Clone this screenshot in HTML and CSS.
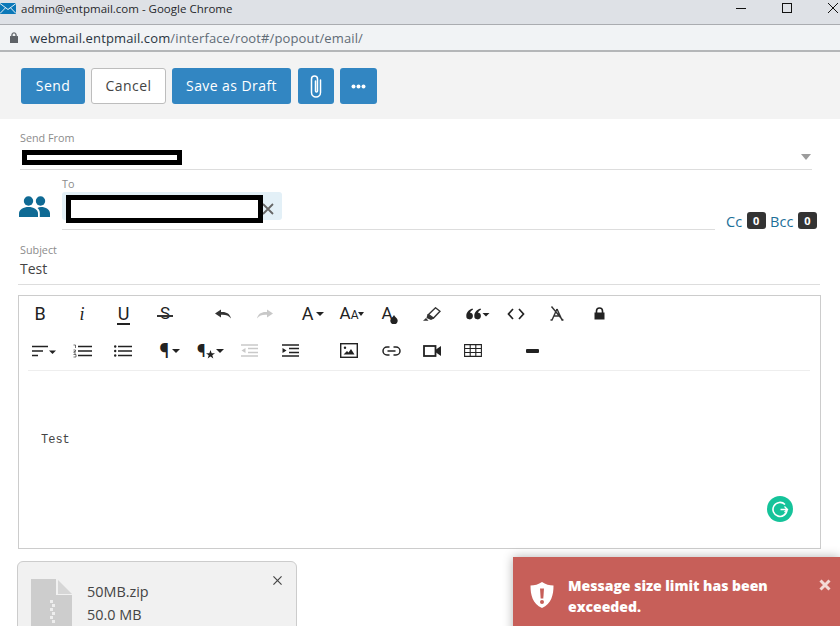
FILE: index.html
```html
<!DOCTYPE html>
<html lang="en">
<head>
<meta charset="utf-8">
<title>admin@entpmail.com - Google Chrome</title>
<link rel="stylesheet" href="styles.css">
</head>
<body>
<div class="page">
  <header class="titlebar">
    <svg class="env" width="16" height="11" viewBox="0 0 16 11"><rect width="16" height="11" fill="#0b78b8"/><path d="M0 0.5L8 6.5L16 0.5M0 10.5L5.5 4.8M16 10.5L10.5 4.8" fill="none" stroke="#e8f2f8" stroke-width="1"/></svg>
    <span class="title">admin@entpmail.com - Google Chrome</span>
    <div class="winctl">
      <svg width="10" height="10" viewBox="0 0 10 10"><path d="M0 5.5H10" stroke="#111" stroke-width="1"/></svg>
      <svg width="10" height="10" viewBox="0 0 10 10"><rect x=".5" y=".5" width="9" height="9" fill="none" stroke="#111"/></svg>
      <svg width="10" height="10" viewBox="0 0 10 10"><path d="M0 0L10 10M10 0L0 10" stroke="#111" stroke-width="1"/></svg>
    </div>
  </header>
  <div class="addressbar">
    <svg width="8" height="11" viewBox="0 0 8 11"><path d="M0 4.5h8V11H0zM1.7 4.5V3a2.3 2.3 0 0 1 4.6 0v1.5" fill="#5f6368" stroke="#5f6368" stroke-width=".8" fill-rule="nonzero"/><path d="M2.6 4V3a1.4 1.4 0 0 1 2.8 0v1z" fill="#f1f3f4"/></svg>
    <span class="url"><span class="host">webmail.entpmail.com</span>/interface/root#/popout/email/</span>
  </div>
  <div class="actions">
    <button class="btn primary send">Send</button>
    <button class="btn cancel">Cancel</button>
    <button class="btn primary draft">Save as Draft</button>
    <button class="btn primary icon clip">
      <svg width="14" height="25" viewBox="0 0 14 25"><path d="M11.500 6V18.500a4.500 4.500 0 0 1-9 0V5a3 3 0 0 1 6 0V17a1 1 0 0 1-2 0V7" fill="none" stroke="#fff" stroke-width="1.500" stroke-linecap="round"/></svg>
    </button>
    <button class="btn primary icon dots">
      <svg width="15" height="5" viewBox="0 0 15 5"><circle cx="2.500" cy="2.500" r="2" fill="#fff"/><circle cx="7.500" cy="2.500" r="2" fill="#fff"/><circle cx="12.500" cy="2.500" r="2" fill="#fff"/></svg>
    </button>
  </div>

  <section class="from">
    <label class="lbl">Send From</label>
    <div class="from-value">
      <span class="redact redact-from"></span>
      <span class="caret-grey"></span>
    </div>
  </section>

  <section class="to-row">
    <svg class="people" width="31" height="22" viewBox="0 0 31 22"><circle cx="9.500" cy="5" r="4.700" fill="#0f6a94"/><circle cx="21.500" cy="5" r="4.700" fill="#0f6a94"/><path d="M0 21v-3.500C0 13.500 4.500 11 9.500 11s9.500 2.500 9.500 6.500V21z" fill="#0f6a94"/><path d="M20.800 21v-4c0-2-.8-3.700-2.300-5 1-.6 2.200-1 3.500-1 4.800 0 9 2.500 9 6.500V21z" fill="#0f6a94"/></svg>
    <div class="to-field">
      <label class="lbl">To</label>
      <div class="chip">
        <span class="redact redact-to"></span>
        <svg class="chip-x" width="12" height="12" viewBox="0 0 12 12"><path d="M1 1L11 11M11 1L1 11" stroke="#666" stroke-width="1.800"/></svg>
      </div>
    </div>
    <div class="ccbcc">
      <a class="cc">Cc</a><span class="badge">0</span>
      <a class="cc bcc">Bcc</a><span class="badge">0</span>
    </div>
  </section>

  <section class="subject">
    <label class="lbl">Subject</label>
    <div class="subject-value">Test</div>
  </section>

  <section class="editor">
    <div class="tb-row">
      <span class="tb w42 t-b">B</span>
      <span class="tb w42 t-i">i</span>
      <span class="tb w41 t-u">U</span>
      <span class="tb w42 t-s">S</span>
      <span class="tb w42 sp16">
        <svg width="18" height="10" viewBox="0 0 18 10"><path d="M7 0.500L1 4.500L7 8.500V5.800C11 5.400 14.500 6.300 17 9.500C16 4.500 12 2.500 7 3z" fill="#333"/></svg>
      </span>
      <span class="tb w42">
        <svg width="18" height="10" viewBox="0 0 18 10"><path d="M11 0.500L17 4.500L11 8.500V5.800C7 5.400 3.500 6.300 1 9.500C2 4.500 6 2.500 11 3z" fill="#c8c8c8"/></svg>
      </span>
      <span class="tb w50 t-a">A<i class="car"></i></span>
      <span class="tb w32 t-aa">A<small>A</small><i class="car sm"></i></span>
      <span class="tb w44 t-drop">A
        <svg class="drop" width="8" height="9" viewBox="0 0 8 9"><path d="M4 0C3 2 .3 3.500 .3 5.400a3.700 3.600 0 0 0 7.400 0C7.700 3.500 5 2 4 0z" fill="#222"/></svg>
      </span>
      <span class="tb w40">
        <svg width="18" height="14" viewBox="0 0 18 14"><path d="M5.500 7.500L12.500 .8L17 4.300L10.500 11z" fill="none" stroke="#333" stroke-width="1.400"/><path d="M4.500 7L11 11.500L8 13L3.500 11z" fill="#333"/><path d="M0 13.800L3 11L5.500 13.800z" fill="#333"/></svg>
      </span>
      <span class="tb w52">
        <svg width="24" height="12" viewBox="0 0 24 12"><path d="M6.500 0.500C2.500 1.800 .3 4.500 .3 8a3.300 3.300 0 1 0 3.700-3.200C4.500 3.500 5.500 2.500 7 1.800zM14.500 0.500C10.500 1.800 8.300 4.500 8.300 8a3.300 3.300 0 1 0 3.700-3.200C12.500 3.500 13.500 2.500 15 1.800z" fill="#222"/><path d="M16.500 5h7L20 8.500z" fill="#222"/></svg>
      </span>
      <span class="tb w24">
        <svg width="18" height="12" viewBox="0 0 18 12"><path d="M6 1L1.500 6L6 11M12 1L16.500 6L12 11" fill="none" stroke="#222" stroke-width="1.700"/></svg>
      </span>
      <span class="tb w58">
        <svg width="14" height="15" viewBox="0 0 14 15"><path d="M7 3L2 14H.5M7 3L12 14H13.500M4 10H10M1.500 0.500L13 14.500" fill="none" stroke="#333" stroke-width="1.400"/></svg>
      </span>
      <span class="tb w26">
        <svg width="11" height="13" viewBox="0 0 11 13"><path d="M0.500 5.500h10V12.500h-10z" fill="#222"/><path d="M2.500 6V4a3 3 0 0 1 6 0v2" fill="none" stroke="#222" stroke-width="1.600"/></svg>
      </span>
    </div>
    <div class="tb-row">
      <span class="tb w48 nudge">
        <svg width="24" height="12" viewBox="0 0 24 12"><path d="M0 1.500H16M0 6H11M0 10.500H6" stroke="#222" stroke-width="1.600"/><path d="M17 5.500h7L20.500 9z" fill="#222"/></svg>
      </span>
      <span class="tb w30">
        <svg width="19" height="14" viewBox="0 0 19 14"><path d="M5 2.500H19M5 7H19M5 11.500H19" stroke="#222" stroke-width="1.500"/><path d="M0.500 1h2v3M.5 6h2v1.500h-1.500V9H3M.5 10.500H3V13H.5" fill="none" stroke="#333" stroke-width=".7"/></svg>
      </span>
      <span class="tb w52">
        <svg width="18" height="12" viewBox="0 0 18 12"><path d="M4 1.500H18M4 6H18M4 10.500H18" stroke="#222" stroke-width="1.600"/><circle cx="1.200" cy="1.500" r="1.200" fill="#222"/><circle cx="1.200" cy="6" r="1.200" fill="#222"/><circle cx="1.200" cy="10.500" r="1.200" fill="#222"/></svg>
      </span>
      <span class="tb w42 t-para">¶<i class="car"></i></span>
      <span class="tb w38 t-para2">¶<svg class="star" width="9" height="9" viewBox="0 0 10 10"><path d="M5 0L6.300 3.500H10L7 5.700L8.100 9.500L5 7.200L1.900 9.500L3 5.700L0 3.500H3.700z" fill="#222"/></svg><i class="car"></i></span>
      <span class="tb w40">
        <svg width="17" height="13" viewBox="0 0 17 13"><path d="M0 1H17M7 4.500H17M7 8.500H17M0 12H17" stroke="#c9c9c9" stroke-width="1.500"/><path d="M4.500 4L0.500 6.500L4.500 9z" fill="#c9c9c9"/></svg>
      </span>
      <span class="tb w42">
        <svg width="17" height="13" viewBox="0 0 17 13"><path d="M0 1H17M7 4.500H17M7 8.500H17M0 12H17" stroke="#222" stroke-width="1.500"/><path d="M0.500 4L4.500 6.500L0.500 9z" fill="#222"/></svg>
      </span>
      <span class="tb w42 sp17">
        <svg width="18" height="15" viewBox="0 0 18 15"><rect x=".7" y=".7" width="16.600" height="13.600" fill="none" stroke="#222" stroke-width="1.400"/><circle cx="5" cy="4.800" r="1.200" fill="#222"/><path d="M3.500 11.500L7 8L8.500 9.500L11 6L14.500 11.500z" fill="#222"/></svg>
      </span>
      <span class="tb w42">
        <svg width="19" height="10" viewBox="0 0 19 10"><path d="M7.500 1H5a4 4 0 0 0 0 8h2.500M11.500 1H14a4 4 0 0 1 0 8h-2.500M5.500 5H13.500" fill="none" stroke="#222" stroke-width="1.500"/></svg>
      </span>
      <span class="tb w40">
        <svg width="18" height="12" viewBox="0 0 18 12"><rect x="1" y="1" width="11.500" height="10" fill="none" stroke="#222" stroke-width="1.800"/><path d="M13 4.500L18 1V11L13 7.500z" fill="#222"/></svg>
      </span>
      <span class="tb w42">
        <svg width="18" height="13" viewBox="0 0 18 13"><path d="M.6.600H17.400V12.400H.6zM.6 4.500H17.400M.6 8.500H17.400M6.200.6V12.400M11.800.6V12.400" fill="none" stroke="#222" stroke-width="1.100"/></svg>
      </span>
      <span class="tb w76">
        <svg width="13" height="4" viewBox="0 0 13 4"><rect width="13" height="4" rx="1" fill="#222"/></svg>
      </span>
    </div>
    <div class="tb-divider"></div>
    <div class="body-text">Test</div>
    <div class="grammarly">
      <svg width="26" height="26" viewBox="0 0 26 26"><circle cx="13" cy="13" r="13" fill="#15c39a"/><path d="M18 8.500A7 7 0 1 0 20 13.500" fill="none" stroke="#fff" stroke-width="1.600"/><path d="M13.500 13.500H20M17.500 10.500L20.500 13.500L17.500 16" fill="none" stroke="#fff" stroke-width="1.300"/></svg>
    </div>
  </section>

  <section class="attachment">
    <svg class="zip" width="41" height="60" viewBox="0 0 41 60"><path d="M0 0H25V16H41V60H0z" fill="#cdcdcd"/><path d="M27 1L41 15H27z" fill="#d6d6d6"/><path d="M19 21h3v3h-3zM21 25h3v3h-3zM19 29h3v3h-3zM21 33h3v3h-3zM19 37h3v3h-3zM21 41h3v3h-3z" fill="#eee"/></svg>
    <div class="att-text">
      <div>50MB.zip</div>
      <div>50.0 MB</div>
    </div>
    <svg class="att-x" width="9" height="9" viewBox="0 0 10 10"><path d="M.5.500L9.500 9.500M9.500.500L.5 9.500" stroke="#444" stroke-width="1.300"/></svg>
  </section>

  <aside class="toast">
    <svg width="24" height="26" viewBox="0 0 24 26"><path d="M12 0C8.500 2.500 4.500 3.500 0.500 3.500C0.500 13 2.500 21.500 12 26C21.500 21.500 23.500 13 23.500 3.500C19.500 3.500 15.500 2.500 12 0z" fill="#fff"/><path d="M10 6.500h4l-.7 10h-2.600z" fill="#c75f59"/><circle cx="12" cy="20" r="2" fill="#c75f59"/></svg>
    <p class="toast-text">Message size limit has been exceeded.</p>
    <svg class="toast-x" width="12" height="12" viewBox="0 0 12 12"><path d="M1.500 1.500L10.500 10.500M10.500 1.500L1.500 10.500" stroke="#f3d9d7" stroke-width="3"/></svg>
  </aside>
</div>
</body>
</html>
```
FILE: styles.css
```css
* { box-sizing: border-box; }
html, body { margin: 0; padding: 0; background: #fff; }
body { font-family: "Open Sans", "Noto Sans", sans-serif; color: #333; }
.page { position: relative; width: 840px; height: 626px; overflow: hidden; }

.titlebar { height: 25px; background: #dee1e6; border-bottom: 1px solid #aaacb0; display: flex; align-items: flex-start; }
.env { margin-top: 3px; flex: none; }
.title { margin-left: 5px; margin-top: 1px; font-size: 11.5px; line-height: 16px; color: #26282b; }
.winctl { margin-left: auto; display: flex; gap: 36px; padding: 3px 2px 0 0; }

.addressbar { height: 27px; background: #f1f3f5; border-bottom: 2px solid #b4b6b8; display: flex; align-items: center; padding-left: 10px; gap: 12px; }
.url { font-size: 13px; color: #5f6b75; letter-spacing: .01em; }
.host { color: #2a3542; }

.actions { height: 67px; background: #f3f3f3; display: flex; align-items: center; gap: 6px; padding: 1px 0 0 21px; }
.btn { height: 36px; border-radius: 3px; font: 14px/1 "Open Sans", sans-serif; letter-spacing: .03em; border: 1px solid transparent; padding: 0; display: flex; align-items: center; justify-content: center; }
.primary { background: #3286c2; color: #fff; }
.send { width: 64px; }
.cancel { width: 75px; background: #fff; border-color: #bdbdbd; color: #444; }
.draft { width: 119px; }
.clip { width: 36px; margin-left: 1px; }
.dots { width: 37px; }

.lbl { display: block; font-size: 10.800px; line-height: 13px; color: #8c8c8c; margin: -1px 0 1px; }
.from { height: 51px; margin: 0 28px 0 20px; padding-top: 13px; border-bottom: 1px solid #ddd; }
.from-value { display: flex; align-items: center; justify-content: space-between; padding: 5px 1px 0 2px; }
.redact { display: block; border: 5px solid #000; background: #fff; }
.redact-from { width: 160px; height: 15px; }
.caret-grey { width: 0; height: 0; margin-top: -1px; border-left: 5.500px solid transparent; border-right: 5.500px solid transparent; border-top: 6px solid #9c9c9c; }

.to-row { height: 60px; display: flex; align-items: flex-start; padding-left: 19px; }
.people { margin-top: 26px; flex: none; }
.to-field { margin-left: 12px; width: 653px; height: 60px; padding-top: 8px; border-bottom: 1px solid #ddd; }
.chip { position: relative; width: 220px; height: 28px; margin-top: 2px; background: #e3f0f7; border-radius: 3px; display: flex; justify-content: flex-end; align-items: center; padding: 6px 8px 0 0; }
.redact-to { position: absolute; left: 4px; top: 3px; width: 197px; height: 28px; }
.chip-x { flex: none; }
.ccbcc { margin-left: 11px; margin-top: 42px; display: flex; align-items: flex-start; font-size: 14.500px; line-height: 17px; }
.cc { color: #1c6f99; margin-top: 1px; }
.bcc { margin-left: 4.500px; }
.badge { margin-left: 4.500px; width: 19px; height: 17px; background: #333; color: #fff; border-radius: 3px; font-size: 11px; font-weight: 700; text-align: center; line-height: 17px; }

.subject { height: 55px; margin-left: 18px; width: 802px; padding: 14px 0 0 2px; border-bottom: 1px solid #ddd; }
.subject-value { font-size: 14px; line-height: 20px; color: #444; margin-top: 3px; }

.editor { position: relative; margin: 10px 0 0 18px; width: 803px; height: 254px; border: 1px solid #ccc; background: #fff; }
.tb-row { display: flex; height: 37px; align-items: center; }
.tb { position: relative; display: flex; align-items: center; justify-content: center; flex: none; margin-bottom: 2px; color: #222; font-family: "Roboto", sans-serif; font-size: 16px; line-height: 1; }
.w24 { width: 24px; } .w26 { width: 26px; } .w30 { width: 30px; } .w32 { width: 32px; } .w38 { width: 38px; }
.w40 { width: 40px; } .w41 { width: 41px; } .w42 { width: 42px; } .w44 { width: 44px; } .w48 { width: 48px; }
.w50 { width: 50px; } .w52 { width: 52px; } .w58 { width: 58px; } .w76 { width: 76px; }
.sp16 { margin-left: 16px; }
.sp17 { margin-left: 17px; }
.nudge { padding-left: 1px; }
.t-b { font-size: 18px; font-weight: 400; }
.t-i { font-style: italic; font-family: "Liberation Serif", serif; font-size: 18px; }
.t-u { font-size: 18px; }
.t-u::after { content: ""; position: absolute; left: 14px; right: 14px; bottom: -2px; height: 1.500px; background: #222; }
.t-s { font-size: 17px; }
.t-s::after { content: ""; position: absolute; left: 13px; width: 16px; top: 10px; height: 1.500px; background: #333; }
.t-a { font-size: 18px; gap: 2px; padding-left: 4px; }
.t-aa { font-size: 17px; }
.t-aa small { font-size: 12px; margin-top: 3px; }
.t-drop { font-size: 17px; padding-right: 6px; }
.drop { position: absolute; left: 22px; top: 10px; }
.car { display: block; width: 0; height: 0; border-left: 4px solid transparent; border-right: 4px solid transparent; border-top: 4px solid #222; margin-left: 1px; }
.car.sm { border-left-width: 3px; border-right-width: 3px; margin-left: 0; }
.t-para { font-size: 20px; gap: 2px; }
.t-para2 { font-size: 18px; padding-left: 1px; }
.star { margin-top: 8px; flex: none; }
.tb-divider { height: 1px; margin: 0 10px 0 9px; background: #eee; }
.body-text { margin: 61px 0 0 22px; font: 12px/16px "Liberation Mono", monospace; color: #444; }
.grammarly { position: absolute; right: 27px; top: 200px; width: 26px; height: 26px; }

.attachment { position: relative; margin: 12px 0 0 17px; width: 280px; height: 90px; background: #f1f1f1; border: 1px solid #ccc; border-radius: 6px; display: flex; align-items: flex-start; padding: 17px 0 0 13px; }
.zip { flex: none; }
.att-text { margin-left: 15px; margin-top: 1px; font-size: 14.400px; line-height: 23px; color: #444; }
.att-x { position: absolute; right: 14px; top: 14px; }

.toast { position: absolute; left: 513px; top: 557px; width: 327px; height: 90px; background: #c75f59; box-shadow: 0 0 10px rgba(0,0,0,.3); display: flex; align-items: flex-start; padding: 25px 0 0 17px; color: #fff; }
.toast-text { margin: -7px 0 0 14px; width: 230px; font-size: 14px; line-height: 21px; font-weight: 800; }
.toast-x { position: absolute; right: 9px; top: 22px; }
```
